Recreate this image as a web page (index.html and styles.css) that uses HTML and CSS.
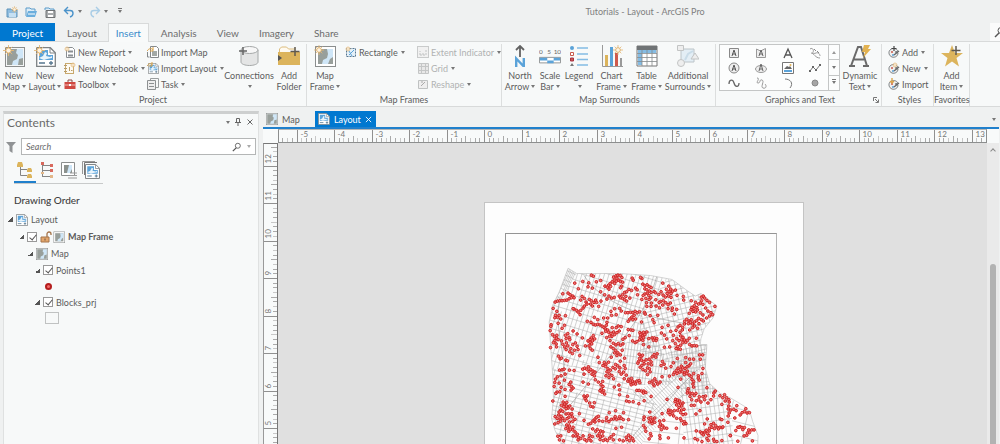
FILE: index.html
```html
<!DOCTYPE html>
<html lang="en">
<head>
  <meta charset="UTF-8">
  <title>Tutorials - Layout - ArcGIS Pro</title>
  <link rel="stylesheet" href="styles.css">
</head>
<body>

<!-- Icon sprite -->
<svg class="sprite" aria-hidden="true">
  <symbol id="sun" viewBox="0 0 12 12">
    <path d="M6 0v12M0 6h12M2 2l8 8M10 2l-8 8" stroke="#e3b878" stroke-width="1"/>
    <circle cx="6" cy="6" r="2.8" fill="#fbf3e4" stroke="#e0ad62"/>
  </symbol>
  <symbol id="map" viewBox="0 0 20 20">
    <rect x=".5" y=".5" width="19" height="19" fill="#f4f6f6" stroke="#8b8e8e"/>
    <rect x="2" y="2" width="16" height="16" fill="#989f9b"/>
    <path d="M12 2h6v9l-4 1-1 6H7l1-4 4-2 1-4-2-2z" fill="#cfe6f7"/>
  </symbol>
  <symbol id="page" viewBox="0 0 20 20">
    <path d="M.7.7h13.6l5 5v13.6H.7z" fill="#fff" stroke="#7d8284" stroke-width="1.3"/>
    <path d="M14 1v5h5" fill="none" stroke="#7d8284"/>
    <path d="M3 3h9v5h5v5H3z" fill="#5ba3d9"/>
    <path d="M3 11l4-2 2-4 2 1-1 3 4 1 2-1v2l-5 1-3 1z" fill="#e9f4fb"/>
    <path d="M3 16h6M15 14v4M13 16h4" stroke="#55778f" stroke-width="1.3"/>
  </symbol>
  <symbol id="new-map" viewBox="0 0 22 22">
    <use href="#map" x="2" y="2" width="20" height="20"/><use href="#sun" width="11" height="11"/>
  </symbol>
  <symbol id="new-layout" viewBox="0 0 22 22">
    <use href="#page" x="2" y="2" width="20" height="20"/><use href="#sun" width="11" height="11"/>
  </symbol>
  <symbol id="report" viewBox="0 0 12 12">
    <path d="M2.5 1.5h6l2 2v8h-8z" fill="#fff" stroke="#8a8f92"/>
    <path d="M4 5.5h5M4 9.500h5" stroke="#8a8f92" stroke-width="2"/><use href="#sun" width="6" height="6"/>
  </symbol>
  <symbol id="notebook" viewBox="0 0 12 12">
    <rect x="1.500" y="1.500" width="8" height="10" fill="#fdfaf2" stroke="#c8a96e"/>
    <path d="M0 3.500h3M0 6.500h3M0 9.500h3M5.500 5v4M7 8.500h1.500" stroke="#b99d67"/><use href="#sun" x="6" width="6" height="6"/>
  </symbol>
  <symbol id="toolbox" viewBox="0 0 12 12">
    <path d="M4 4V2h4v2" fill="none" stroke="#8a4a44"/><path d="M.5 4h11v7H.5z" fill="#cf4a42"/>
    <path d="M.5 7h11" stroke="#f2b9b4"/><path d="M5 6h2v2H5z" fill="#fff"/>
  </symbol>
  <symbol id="import-map" viewBox="0 0 12 12">
    <path d="M3.500.500h6l2 2v9h-8z" fill="#fff" stroke="#85898b"/><path d="M5 5h5v5H5z" fill="#a3a9a6"/>
    <path d="M0 5c2-3 5-3 6-1M6 1v4H3" fill="none" stroke="#d9a248"/><path d="M.500 6v5h2" fill="none" stroke="#85898b"/>
  </symbol>
  <symbol id="import-layout" viewBox="0 0 12 12">
    <use href="#page" x="1" y="1" width="11" height="11"/>
    <path d="M0 4c2-3 4-3 5-1M5 0v4H2" fill="none" stroke="#d9a248"/>
  </symbol>
  <symbol id="task" viewBox="0 0 12 12">
    <path d="M3.500 3V.500h8v9H9" fill="none" stroke="#9a9e9f"/><path d="M.500 2.500h8v9h-8z" fill="#eee" stroke="#8c9091"/>
    <path d="M2 5.500h5M2 8.500h5" stroke="#8c9091"/>
  </symbol>
  <symbol id="db" viewBox="0 0 22 22">
    <path d="M3 5v12c0 2 4 3.500 8.500 3.500S20 19 20 17V5" fill="#e4e5e5" stroke="#a5a8a8"/>
    <ellipse cx="11.500" cy="5" rx="8.500" ry="3.500" fill="#f7f7f7" stroke="#a5a8a8"/>
    <path d="M5 2v8M1 6h8" stroke="#666" stroke-width="1.500"/>
  </symbol>
  <symbol id="folder" viewBox="0 0 22 22">
    <path d="M1.500 8V4l2-2h5l2 2h7" fill="#fffaf0" stroke="#dcbc7c"/><path d="M0 7h22v13H0z" fill="#dcb45c"/>
    <path d="M17 2v9M12.500 6.500h9" stroke="#5f5a50" stroke-width="1.500"/><path d="M0 10l4 3-4 3z" fill="#555"/>
  </symbol>
  <symbol id="map-frame" viewBox="0 0 22 22">
    <rect x="1.500" y="1.500" width="20" height="20" fill="#fff" stroke="#8b8e8e"/>
    <path d="M4 4h15v15H4z" fill="#989f9b"/><path d="M13 4h6v8l-3 2-2 5H8l1-4 4-2 1-4z" fill="#cfe6f7"/>
  </symbol>
  <symbol id="new-frame" viewBox="0 0 22 22">
    <use href="#map-frame" width="22" height="22"/><use href="#sun" width="10" height="10"/>
  </symbol>
  <symbol id="rect-frame" viewBox="0 0 12 12">
    <rect x="1.500" y="2.500" width="9" height="8" fill="#e4f0f8" stroke="#587892" stroke-dasharray="2 1"/>
    <path d="M4 9l5-5M4 5l3 5" stroke="#5ba3d9"/><use href="#sun" width="6" height="6"/>
  </symbol>
  <symbol id="extent" viewBox="0 0 12 12">
    <rect x=".500" y=".500" width="11" height="11" fill="#f1f1f1" stroke="#c9cbcb"/><path d="M3 9V5M6 9V7M3 9h6V4" fill="none" stroke="#c0c3c3" stroke-dasharray="2 1"/>
  </symbol>
  <symbol id="grid" viewBox="0 0 12 12">
    <path d="M1.500 1.500h10v10h-10zM4.500 1v10M8.500 1v10M1 4.500h10M1 8.500h10" fill="#e8e8e8" stroke="#c4c6c6"/>
  </symbol>
  <symbol id="reshape" viewBox="0 0 12 12">
    <path d="M1.500 2.500h9v8h-9z" fill="#eee" stroke="#bfc2c2"/><path d="M4 8l4-4M4 4h2" stroke="#aaa"/>
  </symbol>
  <symbol id="north" viewBox="0 0 22 22">
    <path d="M11 12V1M7 5l4-4 4 4" fill="none" stroke="#626262" stroke-width="1.800"/>
    <path d="M7.200 22v-8.500l7.600 8V13" fill="none" stroke="#5ba3d9" stroke-width="2.400"/>
  </symbol>
  <symbol id="scale" viewBox="0 0 24 22">
    <path d="M.500 12.500h23v6H.500z" fill="#fff" stroke="#8b8e8e"/><path d="M1 13h8v3H1zM9 16h7v3H9zM16 13h7v3h-7z" fill="#5ba3d9"/>
  </symbol>
  <symbol id="legend" viewBox="0 0 22 22">
    <path d="M9 3h11M9 9h11M9 14.500h11M9 20h11" stroke="#84bce4" stroke-width="1.300"/>
    <circle cx="4" cy="3" r="2" fill="#5ba3d9"/><path d="M2.500 7.500h3v3h-3z" fill="#fff" stroke="#c95a4d"/>
    <path d="M2.500 13h3v3h-3z" fill="#c95a4d" stroke="#a34"/><path d="M4 18l2 3H2z" fill="#777"/>
  </symbol>
  <symbol id="chart" viewBox="0 0 22 22">
    <path d="M1.500 0v21.500H22" fill="none" stroke="#999"/><path d="M4 10h3v11H4z" fill="#dcb45c"/>
    <path d="M9 2h3v19H9z" fill="#5ba3d9"/><path d="M14 8h3v13h-3z" fill="#cf5a4d"/><path d="M19 13h2v8h-2z" fill="#999"/>
    <use href="#sun" x="12" width="10" height="10"/>
  </symbol>
  <symbol id="table" viewBox="0 0 22 22">
    <path d="M1 1h20v20H1z" fill="#fff" stroke="#777"/><path d="M1 1h20v4H1z" fill="#6f7375"/><path d="M2 5h4v15H2zM2 5h18v3H2z" fill="#84bce4"/>
    <path d="M6 5v16M11 5v16M16 5v16M1 8.500h20M1 12.500h20M1 16.500h20" stroke="#858a8c" stroke-width=".800"/>
  </symbol>
  <symbol id="surrounds" viewBox="0 0 22 22">
    <path d="M4 4h13v13H4z" fill="#e3eef5" stroke="#bcc4c8"/><path d="M8 15l3-6 5-3" fill="none" stroke="#c9dce8" stroke-width="2"/>
    <path d="M.500.500h6v5h-6zM18 8l4 6h-8z" fill="#eee" stroke="#c2c4c4"/><circle cx="4" cy="18" r="3.500" fill="#eee" stroke="#c2c4c4"/>
  </symbol>
  <symbol id="dynamic" viewBox="0 0 22 22">
    <path d="M2 21L9 2h3l6 19M5 14.500h10M0 21h6M14 21h6" fill="none" stroke="#6a6a6a" stroke-width="2"/>
    <path d="M15 0h6l-2 4h3l-8 9 2-6h-3z" fill="#e2b251"/>
  </symbol>
  <symbol id="star" viewBox="0 0 22 22">
    <path d="M11 0l3 8h8l-6.500 5 2.500 8.500-7-5-7 5L6.500 13 0 8h8z" fill="#dcb45c"/>
    <path d="M15 1v9M10.500 5.500h9" stroke="#5f5a50" stroke-width="1.500"/>
  </symbol>
  <symbol id="palette" viewBox="0 0 12 12">
    <path d="M2 3c3-3 7-1 8 1l-3 1 3 1c0 3-3 5-6 4S0 5 2 3z" fill="#efefef" stroke="#7f8385"/>
    <circle cx="4" cy="5" r="1" fill="#c95a4d"/><circle cx="5" cy="8" r="1" fill="#5ba3d9"/><path d="M6 8l5-4" stroke="#666" stroke-width="1.500"/>
  </symbol>
  <symbol id="style-add" viewBox="0 0 12 12"><use href="#palette" y="1" width="12" height="12"/><path d="M6 0v5M3.500 2.500h5" stroke="#444" stroke-width="1.200"/></symbol>
  <symbol id="style-new" viewBox="0 0 12 12"><use href="#palette" y="1" width="12" height="12"/><use href="#sun" x="4" width="6" height="6"/></symbol>
  <symbol id="style-import" viewBox="0 0 12 12"><use href="#palette" y="1" width="12" height="12"/><path d="M4 0v5M2 3l2 2 2-2" fill="none" stroke="#d9a248" stroke-width="1.300"/></symbol>
  <symbol id="check-lock" viewBox="0 0 12 12">
    <path d="M7 6V3a2 2 0 0 1 4 0v1" fill="none" stroke="#a5744a" stroke-width="1.300"/><path d="M1 6h8v5H1z" fill="#e3a66c" stroke="#a5744a"/><path d="M5 7.500v2" stroke="#654"/>
  </symbol>
  <symbol id="lens" viewBox="0 0 12 12"><circle cx="7" cy="4.500" r="3" fill="none" stroke="#555"/><path d="M5 7l-4 4" stroke="#555" stroke-width="1.500"/></symbol>
</svg>

<header class="titlebar">
  <div class="quick">
    <button aria-label="New project"><svg viewBox="0 0 12 12"><path d="M1 3h4l1 1h5v7H1z" fill="#8fbde0" stroke="#5f94ba"/><path d="M3 11V7h7v4" fill="#c5e0f3"/><use href="#sun" x="5" width="7" height="7"/></svg></button>
    <button aria-label="Open"><svg viewBox="0 0 12 12"><path d="M1 10V2h4l1 1h4v2" fill="#dcecf7" stroke="#5b9bc9"/><path d="M3 5h9l-2 6H1z" fill="#6aaedd"/><path d="M3 8h7" stroke="#fff"/></svg></button>
    <button aria-label="Save"><svg viewBox="0 0 12 12"><path d="M1 4V2h4l1 1h4v3" fill="#dcecf7" stroke="#5b9bc9"/><path d="M2 4.500h9v7H2z" fill="#a8acae" stroke="#6f7375"/><path d="M4 5h5v2H4zM4 9h5v2H4z" fill="#fff"/></svg></button>
    <button aria-label="Undo"><svg viewBox="0 0 12 12"><path d="M5 1L1.500 4.500 5 8M2 4.500h5c4 0 4 5 0 6.500" fill="none" stroke="#4b93ca" stroke-width="1.400"/></svg><i class="caret"></i></button>
    <button aria-label="Redo"><svg viewBox="0 0 12 12"><path d="M7 1l3.500 3.500L7 8M10 4.500H5c-4 0-4 5 0 6.500" fill="none" stroke="#a9cde6" stroke-width="1.400"/></svg><i class="caret"></i></button>
    <button aria-label="Customize"><i class="caret bar"></i></button>
  </div>
  <h1>Tutorials - Layout - ArcGIS Pro</h1>
</header>

<nav class="tabs">
  <a class="project" href="#project">Project</a>
  <a href="#layout">Layout</a>
  <a class="active" href="#insert">Insert</a>
  <a href="#analysis">Analysis</a>
  <a href="#view">View</a>
  <a href="#imagery">Imagery</a>
  <a href="#share">Share</a>
  <button class="find" aria-label="Command search"><svg viewBox="0 0 12 12"><use href="#lens"/></svg></button>
</nav>

<div class="ribbon">
  <section class="group g-project">
    <div class="tools">
      <button class="big"><svg><use href="#new-map"/></svg>New<br>Map<i class="caret"></i></button>
      <button class="big"><svg><use href="#new-layout"/></svg>New<br>Layout<i class="caret"></i></button>
      <div class="stack">
        <button><svg><use href="#report"/></svg>New Report<i class="caret"></i></button>
        <button><svg><use href="#notebook"/></svg>New Notebook<i class="caret"></i></button>
        <button><svg><use href="#toolbox"/></svg>Toolbox<i class="caret"></i></button>
      </div>
      <div class="stack">
        <button><svg><use href="#import-map"/></svg>Import Map</button>
        <button><svg><use href="#import-layout"/></svg>Import Layout<i class="caret"></i></button>
        <button><svg><use href="#task"/></svg>Task<i class="caret"></i></button>
      </div>
      <button class="big"><svg><use href="#db"/></svg>Connections<br><i class="caret"></i></button>
      <button class="big"><svg><use href="#folder"/></svg>Add<br>Folder</button>
    </div>
    <h2>Project</h2>
  </section>

  <section class="group g-frames">
    <div class="tools">
      <button class="big"><svg><use href="#new-frame"/></svg>Map<br>Frame<i class="caret"></i></button>
      <div class="stack">
        <button><svg><use href="#rect-frame"/></svg>Rectangle<i class="caret"></i></button>
      </div>
      <div class="stack dim">
        <button><svg><use href="#extent"/></svg>Extent Indicator<i class="caret"></i></button>
        <button><svg><use href="#grid"/></svg>Grid<i class="caret"></i></button>
        <button><svg><use href="#reshape"/></svg>Reshape<i class="caret"></i></button>
      </div>
    </div>
    <h2>Map Frames</h2>
  </section>

  <section class="group g-surrounds">
    <div class="tools">
      <button class="big"><svg><use href="#north"/></svg>North<br>Arrow<i class="caret"></i></button>
      <button class="big"><svg viewBox="0 0 24 22"><use href="#scale"/><text x="0" y="9">0</text><text x="9" y="9">5</text><text x="16" y="9">10</text></svg>Scale<br>Bar<i class="caret"></i></button>
      <button class="big"><svg><use href="#legend"/></svg>Legend<br><i class="caret"></i></button>
      <button class="big"><svg><use href="#chart"/></svg>Chart<br>Frame<i class="caret"></i></button>
      <button class="big"><svg><use href="#table"/></svg>Table<br>Frame<i class="caret"></i></button>
      <button class="big"><svg><use href="#surrounds"/></svg>Additional<br>Surrounds<i class="caret"></i></button>
    </div>
    <h2>Map Surrounds</h2>
  </section>

  <section class="group g-graphics">
    <div class="tools">
      <div class="gallery">
        <div class="shapes">
          <button aria-label="Rectangle text"><svg viewBox="0 0 12 12"><path d="M1.500 1.500h9v9h-9z" fill="#eee" stroke="#888"/><path d="M4 9l2-6 2 6M4.500 7h3" fill="none" stroke="#555"/></svg></button>
          <button aria-label="Polygon text"><svg viewBox="0 0 12 12"><path d="M1.500 2l4 2 5-2.500v9h-9z" fill="#eee" stroke="#999"/><path d="M4 9l2-6 2 6M4.500 7h3" fill="none" stroke="#666"/></svg></button>
          <button aria-label="Text"><svg viewBox="0 0 12 12"><path d="M2 11l4-9 4 9M3.500 8h5" fill="none" stroke="#555" stroke-width="1.300"/></svg></button>
          <button aria-label="Curved text"><svg viewBox="0 0 12 12"><path d="M1 2c3-2 4 2 3 3s1 2 3 1 4 1 4 3M2 6c3 0 4 5 9 5" fill="none" stroke="#999"/><path d="M5 2l2 2M8 4l2 2" stroke="#888"/></svg></button>
          <button aria-label="Circle text"><svg viewBox="0 0 12 12"><circle cx="6" cy="6" r="5" fill="#eee" stroke="#888"/><path d="M4 9l2-6 2 6M4.500 7h3" fill="none" stroke="#555"/></svg></button>
          <button aria-label="Ellipse text"><svg viewBox="0 0 12 12"><ellipse cx="6" cy="7" rx="5.500" ry="3.500" fill="#eee" stroke="#999"/><path d="M4 9l2-7 2 7M4.500 7h3" fill="none" stroke="#666"/></svg></button>
          <button aria-label="Picture"><svg viewBox="0 0 12 12"><path d="M.500.500h11v11H.500z" fill="#fff" stroke="#777"/><path d="M2 8h8v2H2z" fill="#5ba3d9"/><path d="M2 7l3-3 2 1 1-1 2 3z" fill="#666"/><circle cx="8.500" cy="3" r="1" fill="#e2b251"/></svg></button>
          <button aria-label="Line"><svg viewBox="0 0 12 12"><path d="M1 9l3-4 3 3 4-5" fill="none" stroke="#777"/><path d="M0 8h2v2H0zM3 4h2v2H3zM6 7h2v2H6zM10 2h2v2h-2z" fill="#666"/></svg></button>
          <button aria-label="Curve"><svg viewBox="0 0 12 12"><path d="M1 7c0-5 4-5 5-1s5 5 5 0" fill="none" stroke="#666" stroke-width="1.300"/></svg></button>
          <button aria-label="Freehand"><svg viewBox="0 0 12 12"><path d="M2 1c4 0-2 5 1 5s1-4 4-3-2 7 1 8 4-2 2-4" fill="none" stroke="#999"/></svg></button>
          <button aria-label="Arc"><svg viewBox="0 0 12 12"><path d="M3 2c5 0 9 4 5 9" fill="none" stroke="#777"/></svg></button>
          <button aria-label="Point"><svg viewBox="0 0 12 12"><circle cx="6" cy="6" r="3" fill="#a5a5a5" stroke="#888"/></svg></button>
        </div>
        <div class="spin">
          <button aria-label="Previous"><i class="caret up"></i></button>
          <button aria-label="Next"><i class="caret"></i></button>
          <button aria-label="More"><i class="caret bar"></i></button>
        </div>
      </div>
      <button class="big"><svg><use href="#dynamic"/></svg>Dynamic<br>Text<i class="caret"></i></button>
    </div>
    <h2>Graphics and Text</h2>
    <button class="launcher" aria-label="More options"><svg viewBox="0 0 6 6"><path d="M.500 4V.500H4M2 2l3 3M5.500 2.500v3h-3" fill="none" stroke="#777"/></svg></button>
  </section>

  <section class="group g-styles">
    <div class="tools">
      <div class="stack">
        <button><svg><use href="#style-add"/></svg>Add<i class="caret"></i></button>
        <button><svg><use href="#style-new"/></svg>New<i class="caret"></i></button>
        <button><svg><use href="#style-import"/></svg>Import</button>
      </div>
    </div>
    <h2>Styles</h2>
  </section>

  <section class="group g-favorites">
    <div class="tools">
      <button class="big"><svg><use href="#star"/></svg>Add<br>Item<i class="caret"></i></button>
    </div>
    <h2>Favorites</h2>
  </section>
</div>

<main>
  <aside class="contents">
    <div class="pane-head">
      <h2>Contents</h2>
      <button aria-label="Pane menu"><i class="caret"></i></button>
      <button aria-label="Pin"><svg viewBox="0 0 8 8"><path d="M2.500 4V.500h3V4M1 4.500h6M4 5v3" fill="none" stroke="#666"/></svg></button>
      <button aria-label="Close"><svg viewBox="0 0 8 8"><path d="M1.500 1.500l5 5M6.500 1.500l-5 5" stroke="#666"/></svg></button>
    </div>
    <div class="search">
      <svg class="funnel" viewBox="0 0 12 12"><path d="M1 1h10L7.500 5v7l-3-2V5z" fill="#8f9294"/></svg>
      <div class="field">
        <input type="text" placeholder="Search" aria-label="Search">
        <svg viewBox="0 0 12 12"><use href="#lens"/></svg>
        <i class="caret"></i>
      </div>
    </div>
    <div class="views">
      <button class="on" aria-label="List by drawing order"><svg viewBox="0 0 18 18"><path d="M4.500 5v9.500H11M4.500 8.500H11" fill="none" stroke="#858585"/><path d="M1 4l1-3h4l1 3v2H1zM11 9l1-2h3l1 2v2h-5zM11 15l1-2h3l1 2v2h-5z" fill="#dcb45c"/></svg></button>
      <button aria-label="List by source"><svg viewBox="0 0 18 18"><path d="M4.500 3v13M5 4.500h8M5 9.500h8M5 15.500h8" stroke="#858585"/><path d="M3 1h3v3H3zM12 3h3v3h-3zM12 8h3v3h-3z" fill="#d8695d"/><path d="M3 11h3v2H3zM12 14h3v3h-3z" fill="#e2b78a"/></svg></button>
      <button aria-label="List by map frame"><svg viewBox="0 0 18 18"><path d="M1.500 1.500h13v13h-13z" fill="#fff" stroke="#8b8e8e"/><path d="M4 4h8v8H4z" fill="#8b918d"/><path d="M9 4h3v4l-2 4H7z" fill="#cfe6f7"/><path d="M10 12h7M10 14.500h7M8 17h9" stroke="#999"/></svg></button>
      <button aria-label="List by map series"><svg viewBox="0 0 18 18"><path d="M2.500 14V1.500H15" fill="none" stroke="#777"/><path d="M.500 13V.500H13" fill="none" stroke="#999"/><use href="#page" x="3" y="3" width="15" height="15"/></svg></button>
    </div>
    <h3>Drawing Order</h3>
    <ul class="tree">
      <li><i class="toggle"></i><svg><use href="#page"/></svg>Layout</li>
      <li class="l1"><i class="toggle"></i><input type="checkbox" id="frame" checked><svg><use href="#check-lock"/></svg><svg><use href="#map-frame"/></svg><label for="frame"><b>Map Frame</b></label></li>
      <li class="l2"><i class="toggle"></i><svg><use href="#map"/></svg>Map</li>
      <li class="l3"><i class="toggle"></i><input type="checkbox" id="points" checked><label for="points">Points1</label></li>
      <li class="l4"><span class="dot"></span></li>
      <li class="l3"><i class="toggle"></i><input type="checkbox" id="blocks" checked><label for="blocks">Blocks_prj</label></li>
      <li class="l4"><span class="swatch"></span></li>
    </ul>
  </aside>

  <section class="workspace">
    <div class="doc-tabs">
      <a href="#map-view"><svg><use href="#map"/></svg>Map</a>
      <a class="current" href="#layout-view"><svg><use href="#page"/></svg>Layout<svg class="x" viewBox="0 0 8 8"><path d="M1 1l6 6M7 1L1 7" stroke="#fff"/></svg></a>
      <button aria-label="Tab list"><i class="caret"></i></button>
    </div>
    <div class="view">
      <svg class="ruler-h" id="rulerH"></svg>
      <svg class="ruler-v" id="rulerV"></svg>
      <div class="canvas">
        <div class="sheet">
          <div class="frame">
            <svg viewBox="-105 -75 813 840" id="city">
              <defs>
                <clipPath id="town"><path id="outline" d="M82 28L108 44 240 44 330 50 395 62 440 95 465 112 482 104 530 142 518 178 492 210 482 240 480 258H500L495 330 508 375 540 405 570 418 615 445 630 462 638 490 654 532 650 640 70 640 60 552 42 515 32 480 38 420 35 340 30 270 25 190 35 140 55 100z"/></clipPath>
              </defs>
              <g id="streets" clip-path="url(#town)"></g>
              <use href="#outline" fill="none" stroke="#c0c0c0" stroke-width="2"/>
              <g id="sites"></g>
            </svg>
          </div>
        </div>
      </div>
      <div class="scroll"><i class="chev"></i><span class="thumb"></span></div>
    </div>
  </section>
</main>

<script src="script.js"></script>
</body>
</html>
```
FILE: styles.css
```css
* {
  box-sizing: border-box;
}
body {
  margin: 0;
  height: 100vh;
  display: flex;
  flex-direction: column;
  overflow: hidden;
  background: #eff1f1;
  color: #5c5c5c;
  font: 9px/11px Lato, 'Open Sans', sans-serif;
}
h1, h2, h3, ul {
  margin: 0;
  padding: 0;
  font-weight: normal;
  font-size: inherit;
}
button {
  background: none;
  border: 0;
  padding: 0;
  font: inherit;
  color: inherit;
}
a {
  color: inherit;
  text-decoration: none;
}
svg {
  flex: none;
}
.sprite {
  position: absolute;
  width: 0;
  height: 0;
}
.caret {
  display: inline-block;
  border: 2px solid transparent;
  border-top: 3px solid #777;
  border-bottom: 0;
  margin-left: 3px;
  vertical-align: 2px;
}
.caret.up {
  border-top: 0;
  border-bottom: 3px solid #999;
}
.caret.bar {
  position: relative;
}
.caret.bar::before {
  content: '';
  position: absolute;
  left: -2px;
  top: -5px;
  width: 4px;
  height: 1px;
  background: #777;
}

/* Title bar */
.titlebar {
  display: grid;
  grid-template-columns: 290px 1fr;
  height: 23px;
  align-items: center;
}
.quick {
  display: flex;
  align-items: center;
  gap: 7px;
  padding-left: 6px;
}
.quick button {
  display: flex;
  align-items: center;
}
.quick svg {
  width: 12px;
  height: 12px;
}
.titlebar h1 {
  text-align: center;
  color: #808080;
}

/* Ribbon tabs */
.tabs {
  display: flex;
  height: 19px;
  border-bottom: 1px solid #d8dada;
  font-size: 10px;
  line-height: 20px;
  color: #6c6c6c;
}
.tabs a {
  padding: 0 10px;
}
.tabs .project {
  width: 55px;
  text-align: center;
  padding: 0;
  margin-right: 2px;
  background: #0078d0;
  color: #fff;
}
.tabs .active {
  width: 41px;
  padding: 0;
  margin: 0 2px 0 1px;
  text-align: center;
  height: 19px;
  background: #f8fafa;
  border: 1px solid #d8dada;
  border-bottom: 0;
  line-height: 18px;
  color: #3a8ccb;
}
.find {
  width: 10px;
  overflow: hidden;
  margin-left: auto;
  background: #fafbfb;
}
.find svg {
  display: block;
  width: 12px;
  height: 12px;
  margin-left: 4px;
}

/* Ribbon */
.ribbon {
  display: flex;
  height: 65px;
  padding-top: 2px;
  background: #f7f9f9;
  border-bottom: 1px solid #d8dada;
}
.group {
  position: relative;
  border-right: 1px solid #dcdede;
  display: flex;
  flex-direction: column;
  justify-content: space-between;
}
.group h2 {
  text-align: center;
  line-height: 12px;
  white-space: nowrap;
}
.tools {
  display: grid;
}
.g-project { width: 307px; }
.g-project .tools { grid-template-columns: 28px 34px 83px 79px 50px 30px; }
.g-frames { width: 195px; }
.g-frames .tools { grid-template-columns: 36px 72px 84px; }
.g-surrounds { width: 214px; padding-left: 2px; }
.g-surrounds .tools { grid-template-columns: 32px 28px 30px 35px 35px 48px; }
.g-graphics { width: 166px; padding-left: 3px; }
.g-graphics .tools { grid-template-columns: 121px 40px; }
.g-styles { width: 52px; padding-left: 4px; }
.g-favorites { width: 36px; }

.big {
  text-align: center;
  white-space: nowrap;
  display: block;
}
.big svg {
  display: block;
  width: 22px;
  height: 22px;
  margin: 1px auto 3px;
}
.big text {
  font-size: 7px;
  fill: #666;
}
.big .caret {
  margin-left: 2px;
}
.stack button {
  display: flex;
  align-items: center;
  height: 16px;
  white-space: nowrap;
}
.stack svg {
  width: 12px;
  height: 12px;
  margin: 0 2px;
}
.stack .caret {
  margin-left: 3px;
}
.dim {
  color: #b0b2b2;
}

/* Shape gallery */
.gallery {
  display: flex;
  height: 47px;
  border: 1px solid #c4c6c6;
  background: #fcfdfd;
}
.shapes {
  flex: 1;
  display: grid;
  grid-template-columns: repeat(4, 1fr);
  place-items: center;
}
.shapes svg {
  display: block;
  width: 12px;
  height: 12px;
}
.spin {
  width: 11px;
  display: grid;
  border-left: 1px solid #c4c6c6;
}
.spin button + button {
  border-top: 1px solid #c4c6c6;
}
.spin .caret {
  margin: 0;
}
.launcher {
  position: absolute;
  right: 2px;
  bottom: 3px;
}
.launcher svg {
  display: block;
  width: 6px;
  height: 6px;
}

main {
  flex: 1;
  display: flex;
  gap: 4px;
  min-height: 0;
  padding: 4px 1px 0 3px;
}

/* Contents pane */
.contents {
  width: 256px;
  background: #f7f9f9;
  border: 1px solid #dfe1e1;
  border-top: 3px solid #cdcfcf;
  border-bottom: 0;
}
.pane-head {
  display: flex;
  align-items: center;
  gap: 4px;
  height: 16px;
  padding: 0 4px 0 3px;
}
.pane-head h2 {
  flex: 1;
  font-size: 12px;
  color: #6a6a6a;
}
.pane-head svg {
  display: block;
  width: 8px;
  height: 8px;
}
.search {
  display: flex;
  align-items: center;
  gap: 4px;
  padding: 8px 2px 0 1px;
}
.funnel {
  width: 12px;
  height: 12px;
}
.field {
  flex: 1;
  display: flex;
  align-items: center;
  height: 17px;
  padding: 0 4px;
  background: #fff;
  border: 1px solid #b4b6b6;
}
.field input {
  flex: 1;
  min-width: 0;
  border: 0;
  padding: 0;
  background: none;
  font: italic 9px Lato, sans-serif;
}
.field input::placeholder {
  color: #6c6c6c;
}
.field svg {
  width: 10px;
  height: 10px;
}
.field .caret {
  margin-left: 5px;
  border-top-color: #aaa;
}
.views {
  display: flex;
  width: 89px;
  margin: 4px 0 0 10px;
  border-bottom: 1px solid #c8caca;
}
.views button {
  width: 22px;
  height: 24px;
  padding-left: 2px;
  border-bottom: 2px solid transparent;
}
.views .on {
  border-color: #2080cc;
}
.views svg {
  display: block;
  width: 18px;
  height: 18px;
}
.contents h3 {
  margin: 9px 0 4px 10px;
  font-size: 10px;
  line-height: 14px;
  font-weight: 500;
  color: #404040;
}
.tree {
  list-style: none;
  padding-left: 4px;
}
.tree li {
  display: flex;
  align-items: center;
  gap: 3px;
  height: 17px;
}
.tree svg {
  width: 12px;
  height: 12px;
}
.tree .l1 { padding-left: 11px; }
.tree .l1 svg { margin-right: -2px; }
.tree .l1 svg + svg { margin-right: 0; }
.tree .l2 { padding-left: 20px; }
.tree .l3 { padding-left: 27px; height: 16px; }
.tree .l4 { padding-left: 37px; height: 16px; }
.toggle {
  width: 5px;
  height: 5px;
  background: linear-gradient(135deg, transparent 50%, #555 50%);
}
.tree input {
  appearance: none;
  width: 10px;
  height: 10px;
  margin: 0;
  background: #fff;
  border: 1px solid #999;
}
.tree input:checked::after {
  content: '';
  display: block;
  width: 3px;
  height: 6px;
  margin-left: 3px;
  border: solid #555;
  border-width: 0 1px 1px 0;
  transform: rotate(40deg);
}
.dot {
  width: 7px;
  height: 7px;
  border: 2px solid #b41e1e;
  border-radius: 50%;
  background: #f46a6a;
}
.swatch {
  width: 14px;
  height: 12px;
  border: 1px solid #c0c2c2;
}

/* Layout view */
.workspace {
  flex: 1;
  min-width: 0;
  display: flex;
  flex-direction: column;
}
.doc-tabs {
  display: flex;
  height: 18px;
  border-bottom: 2px solid #2080cc;
}
.doc-tabs a {
  display: flex;
  align-items: center;
  gap: 4px;
  width: 52px;
  padding-left: 3px;
}
.doc-tabs .current {
  width: 61px;
  background: #0078d0;
  color: #fff;
}
.doc-tabs svg {
  width: 12px;
  height: 12px;
}
.doc-tabs .x {
  width: 7px;
  height: 7px;
}
.doc-tabs button {
  margin-left: auto;
  margin-right: 3px;
}
.view {
  flex: 1;
  min-height: 0;
  display: grid;
  grid-template-columns: 15px 1fr 12px;
  grid-template-rows: 14px 1fr;
  background: #f8fafa;
}
.ruler-h {
  grid-column: 2;
  width: 100%;
  height: 14px;
  border: 1px solid #8c8e8e;
  border-top-color: #b4b6b6;
}
.ruler-v {
  grid-column: 1;
  grid-row: 2;
  width: 15px;
  height: 100%;
  border: 1px solid #777;
  border-left-color: #999;
  border-bottom: 0;
}
.view text {
  font-size: 8px;
  fill: #777;
}
.canvas {
  grid-column: 2;
  grid-row: 2;
  overflow: hidden;
  padding: 59px 0 0 206px;
  background: #e0e0e0;
}
.sheet {
  width: 320px;
  height: 414px;
  padding: 30px 26px 28px 20px;
  background: #fdfdfd;
  border: 1px solid #c4c4c4;
}
.frame {
  height: 100%;
  border: 1px solid #949494;
  border-right-color: #b4b4b4;
}
.frame svg {
  display: block;
  width: 100%;
}
.scroll {
  grid-row: 2;
  grid-column: 3;
  display: flex;
  flex-direction: column;
  align-items: center;
  background: #eaeaea;
}
.chev {
  width: 4px;
  height: 4px;
  margin-top: 6px;
  border: solid #888;
  border-width: 1px 0 0 1px;
  transform: rotate(45deg);
}
.thumb {
  flex: 1;
  width: 6px;
  margin-top: 111px;
  border-radius: 3px 3px 0 0;
  background: #b2b2b2;
}
```
FILE: script.js
```js
const NS = 'http://www.w3.org/2000/svg';
const INCH = 37.5;

function add(parent, tag, attrs, text) {
  const el = document.createElementNS(NS, tag);
  for (const key in attrs) el.setAttribute(key, attrs[key]);
  if (text !== undefined) el.textContent = text;
  parent.appendChild(el);
  return el;
}

// Rulers
const rulerH = document.getElementById('rulerH');
for (let i = -43; i <= 106; i++) {
  const x = Math.round(205 + i * INCH / 8) + 0.5;
  const inch = i % 8 === 0;
  const len = inch ? 12 : i % 4 === 0 ? 6 : 4;
  add(rulerH, 'path', { d: `M${x} 12v-${len}`, stroke: inch ? '#909090' : i % 3 ? '#aaa' : '#c8c8c8' });
  if (inch) add(rulerH, 'text', { x: x + 3, y: 7 }, i / 8);
}

const rulerV = document.getElementById('rulerV');
for (let i = 37; i <= 100; i++) {
  const y = Math.round(59 + (88 - i) * INCH / 8) + 0.5;
  const inch = i % 8 === 0;
  const len = inch ? 13 : i % 4 === 0 ? 6 : 4;
  add(rulerV, 'path', { d: `M13 ${y}h-${len}`, stroke: inch ? '#909090' : i % 3 ? '#aaa' : '#c8c8c8' });
  if (inch) add(rulerV, 'text', { transform: `translate(7 ${y - 3}) rotate(-90)` }, i / 8);
}

// Streets: each district is a clipped grid turned to its own angle
const districts = [
  { area: '0,0 130,0 60,130 0,150', angle: 25, dx: 5, dy: 14 },
  { area: '130,0 60,130 0,150 0,340 230,300 300,180 380,60 300,0', angle: 17, dx: 13, dy: 23 },
  { area: '380,60 300,180 300,290 500,330 560,140 480,90', angle: -14, dx: 15, dy: 15 },
  { area: '300,180 230,300 260,380 380,380 480,330 380,300', angle: 8, dx: 9, dy: 20 },
  { area: '0,340 230,300 260,380 350,440 250,560 240,660 0,660', angle: 14, dx: 21, dy: 13 },
  { area: '480,330 380,360 270,400 340,450 250,560 300,560 420,430', angle: 48, dx: 26, dy: 8 },
  { area: '380,280 520,250 500,330 540,400 450,420 420,360', angle: -4, dx: 9, dy: 22 },
  { area: '420,380 500,340 570,418 590,660 440,660', angle: -8, dx: 13, dy: 22 },
  { area: '570,418 660,440 680,660 590,660', angle: 14, dx: 55, dy: 40 },
  { area: '420,430 440,660 240,660 300,560', angle: 6, dx: 60, dy: 34 }
];
const city = document.getElementById('city');
const defs = city.querySelector('defs');
const streets = document.getElementById('streets');
districts.forEach((d, n) => {
  const clip = add(defs, 'clipPath', { id: 'district' + n });
  add(clip, 'polygon', { points: d.area });
  const outer = add(streets, 'g', { 'clip-path': `url(#district${n})` });
  let path = '';
  for (let x = -600; x < 600; x += d.dx) {
    if (x % 4) path += `M${x} -600V600`;
    else path += `M${x} -600V-90M${x} -60V50M${x + 3} 60V130M${x} 150V600`;
  }
  for (let y = -600; y < 600; y += d.dy) path += `M-600 ${y}H600`;
  add(outer, 'path', { d: path, transform: `translate(320 300) rotate(${d.angle})`, fill: 'none', stroke: '#a8a8a8', 'stroke-width': 1.4 });
});
add(streets, 'path', {
  d: 'M470 335C400 400 380 440 330 480S270 550 240 580M40 500C120 400 180 330 240 250S330 120 350 50M55 130C40 250 90 300 60 400S40 470 90 520M130 50C180 130 300 180 480 200',
  fill: 'none', stroke: '#a0a0a0', 'stroke-width': 2
});

// Sampled points, in frame units
const samples = `
152,49 158,52 102,73 126,68 144,72 167,69 180,65 142,84 155,88 113,90 66,105 82,103 88,108 96,112
43,130 50,127 57,126 64,126 71,125 78,124 85,120 92,117 100,117 37,149 48,158 44,170 50,176 55,170 42,177 60,181 74,171
124,113 120,124 131,119 136,130 146,122 152,126 160,131 165,124 150,136 155,142 168,131 174,143 100,151 108,155 97,150 112,160 118,168 120,155 127,148 131,142 139,136
193,82 200,85 204,79 209,74 215,69 221,64 219,55 226,51 232,49 239,50 244,56 229,58 235,64 240,68 227,67 222,74 246,70 243,82 240,87 210,83 205,91
180,99 192,108 199,121 205,112 213,118 221,116 181,127 275,58 278,64 304,59 300,56 265,92 273,95 285,88 290,93 291,108 252,101 258,99 246,108 236,112 240,117 246,119 252,123 258,127 268,118 256,113
307,76 313,80 320,78 326,83 332,86 313,90 319,93 327,97 332,101 320,103 313,106 308,110 325,110 341,98 345,102 355,107 362,99 304,122 316,119 326,122 331,117
367,73 385,82 378,92 391,91 397,97 386,99 380,104 392,104 405,94 368,109 375,115 385,112 392,116 361,128 369,126 376,132 383,138 390,133 356,131 346,123 318,132 333,133
429,113 430,124 453,126 396,148 409,152 395,155 402,166 383,150 367,139 347,142 357,147 332,143 319,143 410,110
483,115 489,112 493,118 500,125 508,131 484,126 480,133 488,137 524,143 496,148 503,157 512,162 517,168 508,172 499,178 466,131 475,136 462,141 455,146 461,150 470,147 452,153 458,158 466,160 447,164 471,154 480,162 488,169
161,176 171,183 189,178 201,178 213,170 211,158 222,150 237,149 242,157 227,168 255,162 262,162 270,161 277,162 284,158 290,162 297,159 312,161 314,166 281,170 274,175 268,181 277,183 285,181 263,188 303,190 329,171 337,183 341,192 352,170
140,188 151,191 158,197 164,199 171,197 178,199 185,203 190,206 197,200 199,191 194,211 201,214 195,218 204,221 211,224 219,220 215,207 227,207 233,202 242,204 222,228 214,233 207,233 198,237 184,224 229,222 236,217
31,198 52,194 30,203 28,216 35,228 41,234 47,239 42,246 38,252 46,256 52,243 48,230 64,209 71,200 97,217 109,226 125,238 74,230 81,225 85,236 76,240 87,243 62,247 66,257 77,253 72,265 81,262 90,270 96,258 109,263 76,273 87,280 95,285 101,275 112,273 117,291 104,253 134,262
158,231 152,238 148,243 155,247 148,251 142,247 153,256 145,262 149,270 155,275 162,241 29,267 47,265 53,293 58,301 75,305 80,307 62,299
263,213 271,214 277,215 298,222 304,225 309,221 300,228 307,232 313,228 319,220 299,236 303,241 307,245 297,244 309,237 284,252 289,249 276,247 254,237 247,242 266,231 325,240 335,238 342,238 349,240 347,246 339,245 365,206 363,223 372,230 379,241 383,200 391,218 399,230 407,215 413,205 419,200 427,206 432,196 426,214 419,221 433,188 439,182 446,187 453,183 450,191 444,195 456,196 462,190 469,186 475,179 483,183 489,187 476,195 472,209 463,202 457,207 448,214
421,232 428,236 424,243 416,246 409,240 432,244 436,251 427,252 421,260 412,264 405,255 413,271 407,270 420,272 441,246 448,258 455,262 462,261 469,262 468,239 447,239 388,265 372,266 397,246 325,265 309,258
208,246 218,254 226,259 233,255 240,260 247,256 211,265 218,270 225,276 232,283 239,289 229,291 222,283 245,275 252,299 239,308 212,296 204,311 172,296 176,312 191,312 196,317 187,321 195,324 202,331 209,335 217,327 224,331 231,322 238,328 225,318 251,321 254,330 199,340 206,346 214,351 219,361 205,357 196,352
296,287 302,294 306,290 297,300 294,309 303,305 310,309 317,304 311,316 304,321 299,326 307,333 315,337 321,328 327,331 333,319 332,310 326,302 335,295 341,288 350,286 329,340 292,314 346,296 323,316
362,321 371,317 376,329 366,309 399,313 411,300 423,323 436,297 448,302 460,302 478,289 487,289 488,330 480,302 446,322 451,316 440,325 434,330 427,328 420,333 413,329 408,336 402,342 410,345 418,341 426,340 433,343 441,338 399,348 392,324 387,353 436,312
56,335 64,334 70,332 86,335 100,336 50,355 44,362 61,352 73,347 42,372 55,374 40,384 61,387 71,365 90,371 85,378 92,384 97,389 91,395 73,393 49,401 57,400 45,405
126,332 132,329 138,332 143,325 150,333 157,338 163,341 154,347 161,352 145,339 130,347 164,364 173,371 186,369 181,379 187,384 182,392 189,397 184,401 192,407 178,397 221,386 235,380 237,394 127,371 143,377
236,339 249,341 242,347 257,350 251,361 262,368 269,371 276,368 282,372 289,368 296,366 272,379 278,376 285,377 265,362 298,373 273,360 321,348 343,361 335,368 327,372 341,382 352,377 347,369 365,355 338,377 359,371
289,396 296,396 303,398 310,398 316,402 309,404 332,414 261,414 237,409 258,428 266,430 278,430 295,436 311,427
421,362 413,387 432,348 439,345 447,350 453,354 460,345 455,363 460,369 458,377 460,386 474,352 474,359 477,365 444,391 442,397 441,404 449,404 456,405 467,405 500,388 485,345
130,413 136,417 140,412 133,421 137,427 147,434 161,433 150,444 157,446 36,428 73,414 67,431 72,437 78,432 77,443 82,449 76,451 69,445 62,441 87,443 60,455 55,461 66,459 94,452
43,475 49,480 58,482 54,470 61,474 66,480 71,487 59,489 52,493 76,467 83,466 90,468 84,477 79,481 95,476 103,483 96,489 86,491 93,466 116,466 42,497 78,500 86,503 80,509 89,513 97,507 84,519 75,511
130,486 143,498 150,495 157,488 163,482 168,477 173,474 175,487 163,491 186,489 197,487 205,490 212,483 206,463 225,457 249,463 219,482 228,483 235,481 242,480 248,484 237,475 224,475 264,484 198,478 243,507 226,510 156,512 165,519 170,514 180,518 187,521 176,526 171,533 179,536 186,533
60,533 51,534 56,545 68,548 96,515 103,521 110,528 105,533 97,533 113,537 120,541 112,545 127,533 132,544 138,548 145,541 151,548 147,531 155,535 194,543 200,547 207,540 212,535 218,545 178,544 188,547 237,545 248,548 257,537 264,531 270,536 276,541 259,544 267,547 279,548 219,529
310,484 311,476 328,461 325,480 331,478 337,485 343,492 333,488 327,491 335,496 358,488 370,486 360,497 367,503 372,509 363,514 357,505 379,510 314,509 309,502 316,519 330,526 332,533 358,532 359,541 326,542 384,539 431,539 343,479
406,423 412,425 404,430 412,433 418,428 421,437 409,440 416,447 424,443 428,434 385,455 392,458 383,463 389,469 396,466 402,457 365,466 380,423 412,456 424,455 431,453 421,463 428,469 436,467 400,473 409,480 420,481 432,490 437,496 430,497 408,510 423,487
454,424 468,427 462,411 449,414 462,441 453,441 475,424 482,431 477,415 488,415 496,413 479,457 467,467 512,424 520,413 525,398 539,412 553,409 548,418 559,418 566,424 521,404 555,428 567,431 545,438 493,424 503,434
564,452 572,455 581,453 588,457 590,442 566,443 606,463 613,460 617,451 621,464 628,463 600,470 584,479 564,473 567,464 540,482 545,484 563,492 501,482 493,497 512,499 520,495 526,502 533,508 539,507 546,508 508,510 515,507 523,511 535,512 548,506
468,518 480,521 487,524 494,521 501,526 507,518 498,516 484,525 506,532 489,530 571,532 593,507 600,505 606,508 613,508 608,514 597,507 587,517 626,515 628,523 620,531 612,533 635,515 642,515 622,524 464,541 472,545 485,550 504,547 520,543 522,549 593,549 637,548 570,532 530,550 545,547 500,541`;

const sites = document.getElementById('sites');
samples.trim().split(/\s+/).forEach(pair => {
  const [x, y] = pair.split(',');
  add(sites, 'circle', { cx: x, cy: y, r: 4 });
});
sites.setAttribute('fill', '#ee7c7c');
sites.setAttribute('stroke', '#cc2020');
sites.setAttribute('stroke-width', 3);
```
